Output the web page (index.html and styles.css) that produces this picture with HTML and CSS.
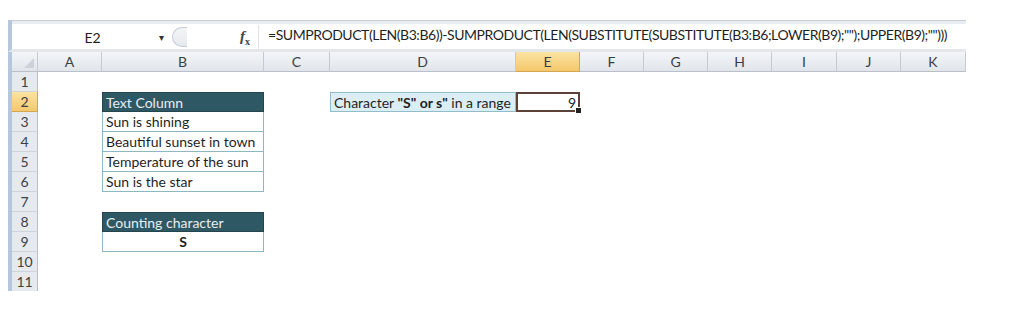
FILE: index.html
```html
<!DOCTYPE html>
<html lang="en">
<head>
    <meta charset="UTF-8">
    <title>Count character in range</title>
    <link rel="stylesheet" href="styles.css">
</head>
<body>
    <div class="excel">
        <!-- Barra de fórmulas -->
        <div class="formula-bar">
            <div class="name-box">
                <span class="cell-ref">E2</span>
                <span class="arrow">&#9662;</span>
            </div>
            <div class="fx-area">
                <span class="round-btn"></span>
                <span class="fx"><i>f</i><sub>x</sub></span>
            </div>
            <div class="formula">=SUMPRODUCT(LEN(B3:B6))-SUMPRODUCT(LEN(SUBSTITUTE(SUBSTITUTE(B3:B6;LOWER(B9);"");UPPER(B9);"")))</div>
        </div>

        <!-- Planilha -->
        <div class="sheet">
            <div class="corner"><span class="tri"></span></div>
            <div class="ch">A</div>
            <div class="ch">B</div>
            <div class="ch">C</div>
            <div class="ch">D</div>
            <div class="ch active">E</div>
            <div class="ch">F</div>
            <div class="ch">G</div>
            <div class="ch">H</div>
            <div class="ch">I</div>
            <div class="ch">J</div>
            <div class="ch">K</div>

            <div class="rh">1</div>
            <div class="rh active">2</div>
            <div class="cell col-b head">Text Column</div>
            <div class="cell col-d label"><span>Character <b>"S" or s"</b> in a range</span></div>
            <div class="cell col-e selected">9<span class="handle"></span></div>
            <div class="rh">3</div>
            <div class="cell col-b item">Sun is shining</div>
            <div class="rh">4</div>
            <div class="cell col-b item">Beautiful sunset in town</div>
            <div class="rh">5</div>
            <div class="cell col-b item">Temperature of the sun</div>
            <div class="rh">6</div>
            <div class="cell col-b item">Sun is the star</div>
            <div class="rh">7</div>
            <div class="rh">8</div>
            <div class="cell col-b head">Counting character</div>
            <div class="rh">9</div>
            <div class="cell col-b item center"><b>S</b></div>
            <div class="rh">10</div>
            <div class="rh">11</div>
        </div>
    </div>
</body>
</html>
```

FILE: styles.css
```css
body {
    margin: 0;
    background-color: #fff;
    font-family: Lato, "Liberation Sans", sans-serif;
    color: #1f1f1f;
}
.excel {
    margin: 20px 0 0 8px;
    width: 958px;
}
.formula-bar {
    display: flex;
    height: 24px;
    border-top: 1px solid #c9ced6;
    border-bottom: 3px solid #e3e7ec;
    box-shadow: inset 0 3px 0 #e9ecf0;
    padding-top: 4px;
    font-size: 14px;
    border-left: 4px solid #b4c7dc;
}
.name-box {
    width: 160px;
    display: flex;
    align-items: center;
    background: #fff;
}
.cell-ref {
    flex: 1;
    text-align: center;
    padding-left: 14px;
}
.arrow {
    font-size: 10px;
    color: #333;
    margin-right: 8px;
}
.fx-area {
    width: 86px;
    display: flex;
    align-items: center;
    justify-content: space-between;
    background: #fff;
    border-right: 1px solid #dfe3e8;
}
.round-btn {
    width: 14px;
    height: 18px;
    border: 1px solid #c7ccd3;
    border-radius: 10px 0 0 10px;
    border-right: none;
    background: linear-gradient(#f4f5f7, #e6e9ed);
}
.fx {
    font-family: "Liberation Serif", serif;
    font-size: 15px;
    font-weight: bold;
    color: #444;
    margin-right: 8px;
}
.fx sub {
    font-size: 10px;
}
.formula {
    flex: 1;
    background: #fff;
    padding-left: 9px;
    line-height: 20px;
    letter-spacing: -0.45px;
    white-space: nowrap;
    overflow: hidden;
}
.sheet {
    display: grid;
    grid-template-columns: 26px 64px 162px 66px 186px 64px 64px 64px 64px 65px 64px 65px;
    grid-template-rows: repeat(12, 20px);
    border-left: 4px solid #b4c7dc;
    height: 239px;
    overflow: hidden;
    font-size: 14px;
}
.corner, .ch {
    background: linear-gradient(#f3f5f8, #e1e5ea);
    border-right: 1px solid #c4cad2;
    border-bottom: 1px solid #b9c0c9;
}
.corner {
    position: relative;
}
.tri {
    position: absolute;
    right: 3px;
    bottom: 3px;
    border-left: 10px solid transparent;
    border-bottom: 10px solid #cdd2d9;
}
.ch {
    display: flex;
    align-items: center;
    justify-content: center;
    color: #3a3f47;
}
.ch.active, .rh.active {
    background: linear-gradient(#fbe3a2, #f4c86d);
    border-color: #d5a64f;
}
.rh {
    grid-column: 1;
    background: #e6eaef;
    border-right: 1px solid #b9c0c9;
    border-bottom: 1px solid #cfd4db;
    display: flex;
    align-items: center;
    justify-content: center;
    color: #3a3f47;
}
.cell {
    display: flex;
    align-items: center;
    padding: 0 3px;
    white-space: nowrap;
    box-sizing: border-box;
}
.col-b {
    grid-column: 3;
}
.col-d {
    grid-column: 5;
}
.col-e {
    grid-column: 6;
}
.head {
    background-color: #2f5865;
    color: #e8eef0;
    border: 1px solid #24444e;
}
.item {
    border: 1px solid #8fb6c4;
    border-top: none;
}
.center {
    justify-content: center;
}
.label {
    background-color: #dbeef4;
    border: 1px solid #92bccb;
}
.selected {
    justify-content: flex-end;
    border: 2px solid #5d4038;
    position: relative;
    padding-right: 2px;
}
.handle {
    position: absolute;
    right: -4px;
    bottom: -4px;
    width: 5px;
    height: 5px;
    background: #222;
    border: 1px solid #fff;
}
```
